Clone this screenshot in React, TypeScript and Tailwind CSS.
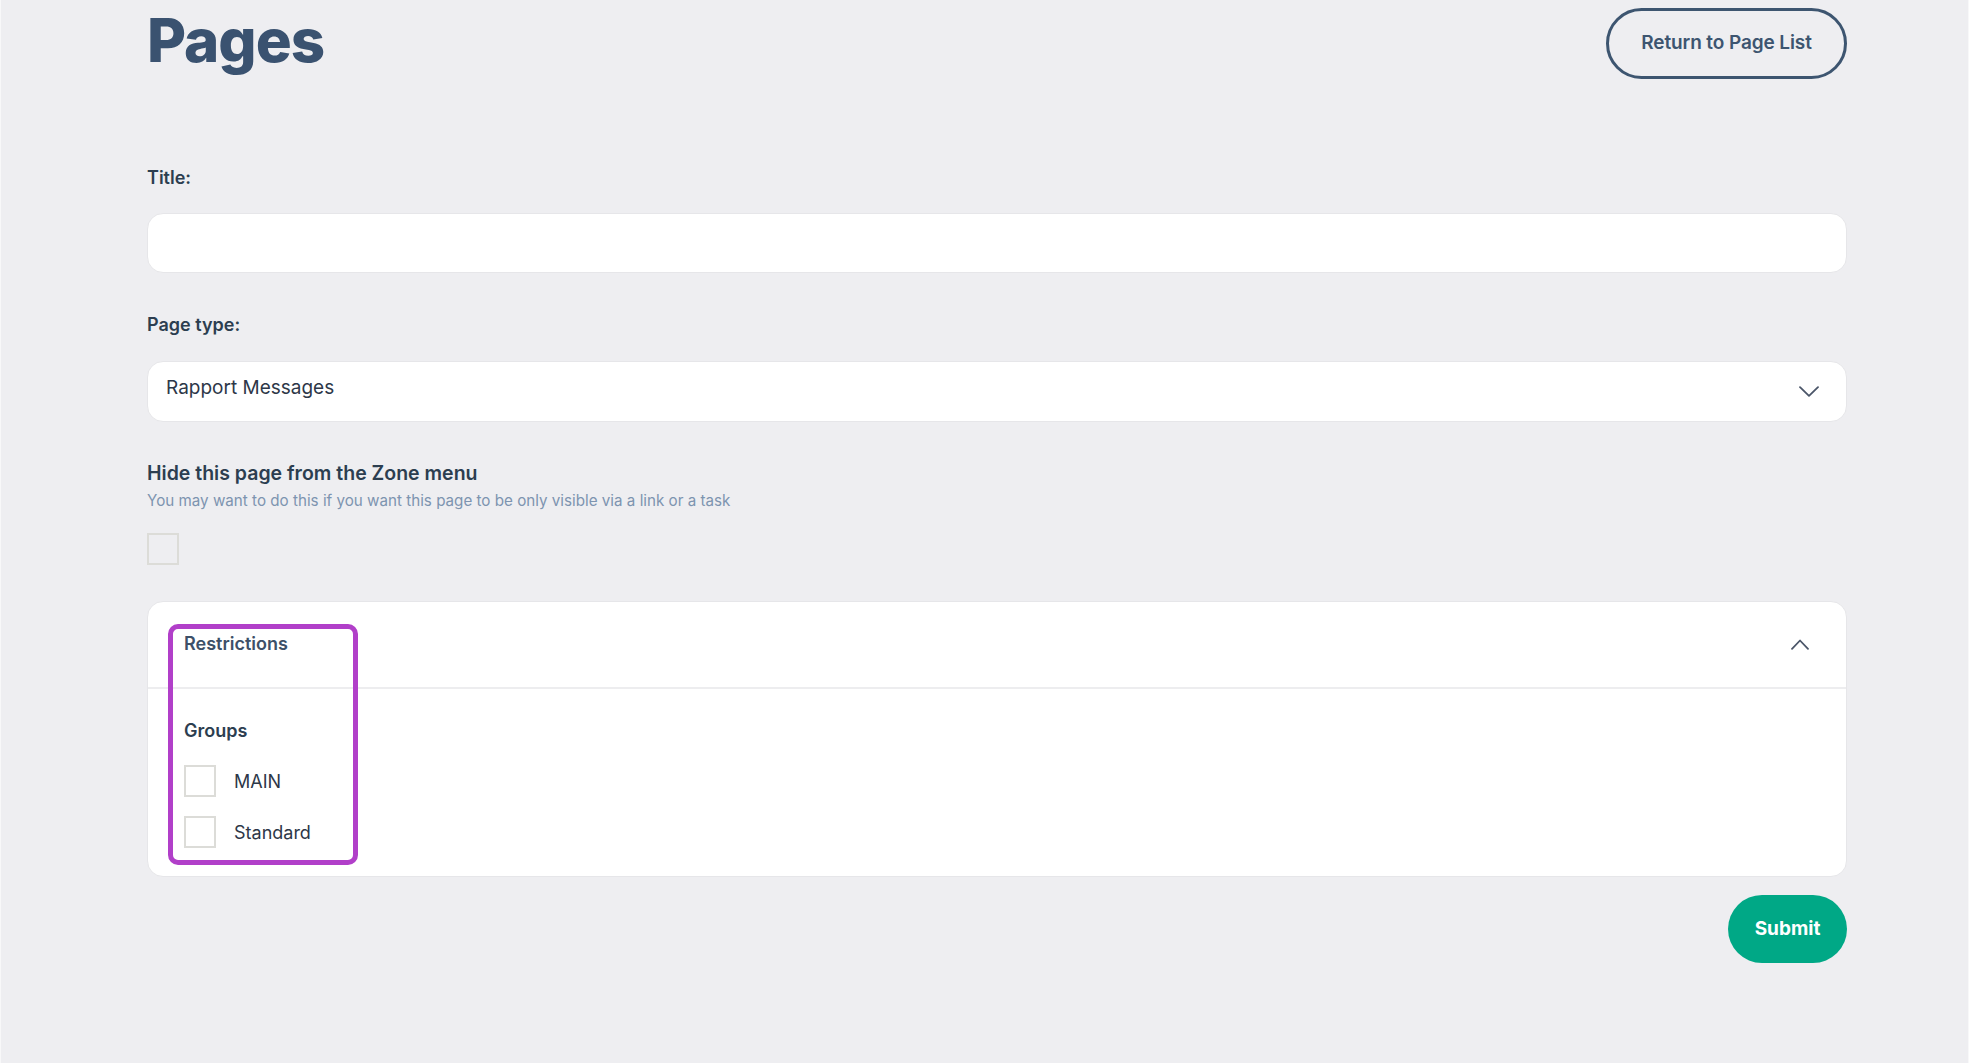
import React from "react";

const font = { fontFamily: "Inter, Lato, 'Open Sans', sans-serif" };

function Box() {
  return <div className="w-[32px] h-[32px] border-2 border-[#dcdcd8] shrink-0" />;
}

export default function App() {
  return (
    <div
      className="min-h-screen w-full bg-[#eeeef1] border-l border-r border-[#f8f8f9]"
      style={font}
    >
      <div className="pl-[146px] pr-[121px] pb-[100px]">
        <div className="flex justify-between items-start pt-[8px]">
          <h1 className="text-[60px] leading-[64px] font-extrabold text-[#3a5270] tracking-[-1px]">
            Pages
          </h1>
          <button className="h-[71px] w-[241px] rounded-full border-[3px] border-[#3d5570] text-[#3d5570] text-[19px] font-semibold flex items-center justify-center tracking-[-0.1px]">
            Return to Page List
          </button>
        </div>

        <div className="mt-[87px] text-[18px] leading-[24px] font-semibold text-[#2c3e50]">Title:</div>
        <div className="mt-[23px] h-[60px] rounded-[16px] bg-white border border-[#e6e6e9]" />

        <div className="mt-[40px] text-[18px] leading-[24px] font-semibold text-[#2c3e50]">Page type:</div>
        <div className="mt-[24px] h-[61px] rounded-[16px] bg-white border border-[#e6e6e9] flex items-center justify-between pl-[18px] pr-[27px]">
          <span className="text-[19px] text-[#2d3748] -mt-[7px]">Rapport Messages</span>
          <svg width="20" height="11" viewBox="0 0 20 11" fill="none">
            <path d="M1 1.2L10 9.8L19 1.2" stroke="#4a5568" strokeWidth="1.8" strokeLinecap="round" strokeLinejoin="round" />
          </svg>
        </div>

        <div className="mt-[39px] text-[19.5px] leading-[24px] font-semibold text-[#2c3e50]">
          Hide this page from the Zone menu
        </div>
        <div className="mt-[6px] text-[15.2px] leading-[20px] text-[#7d94b0]">
          You may want to do this if you want this page to be only visible via a link or a task
        </div>
        <div className="mt-[22px]">
          <Box />
        </div>

        <div className="relative mt-[36px] rounded-[16px] bg-white border border-[#e6e6e9]">
          <div className="h-[87px] flex items-center justify-between pl-[36px] pr-[37px] border-b-2 border-[#ededef]">
            <span className="text-[18px] font-semibold text-[#3d5068] -mt-[3px]">Restrictions</span>
            <svg width="18" height="11" viewBox="0 0 18 11" fill="none">
              <path d="M1 9.8L9 1.5L17 9.8" stroke="#4a5568" strokeWidth="1.8" strokeLinecap="round" strokeLinejoin="round" />
            </svg>
          </div>
          <div className="pl-[36px] pt-[30px] pb-[28px]">
            <div className="text-[18px] leading-[24px] font-semibold text-[#2c3e50]">Groups</div>
            <div className="mt-[22px] flex flex-col gap-[19px]">
              <div className="flex items-center gap-[18px]">
                <Box />
                <span className="text-[18px] text-[#2d3748]">MAIN</span>
              </div>
              <div className="flex items-center gap-[18px]">
                <Box />
                <span className="text-[18px] text-[#2d3748]">Standard</span>
              </div>
            </div>
          </div>
          <div className="absolute left-[20px] top-[22px] w-[190px] h-[241px] border-[5px] border-[#b13fc9] rounded-[10px] pointer-events-none" />
        </div>

        <div className="mt-[18px] flex justify-end">
          <button className="h-[68px] w-[119px] rounded-full bg-[#00a886] text-white text-[19px] font-bold">
            Submit
          </button>
        </div>
      </div>
    </div>
  );
}
